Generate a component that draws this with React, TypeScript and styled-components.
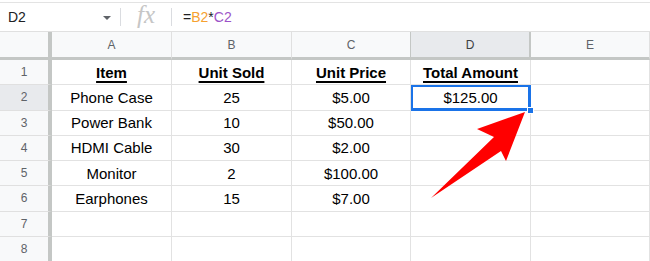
import styled, { createGlobalStyle, css } from 'styled-components';

const GlobalStyle = createGlobalStyle`
	html, body {
		margin: 0;
		padding: 0;
		background: #ffffff;
		font-family: Arial, 'Liberation Sans', sans-serif;
		overflow: hidden;
	}
`;

const columns = ['A', 'B', 'C', 'D', 'E'];

const header = ['Item', 'Unit Sold', 'Unit Price', 'Total Amount', ''];

const rows: string[][] = [
	['Phone Case', '25', '$5.00', '$125.00', ''],
	['Power Bank', '10', '$50.00', '', ''],
	['HDMI Cable', '30', '$2.00', '', ''],
	['Monitor', '2', '$100.00', '', ''],
	['Earphones', '15', '$7.00', '', ''],
	['', '', '', '', ''],
	['', '', '', '', ''],
];

const App = () => {
	return (
		<Page>
			<GlobalStyle />
			<FormulaBar>
				<NameBox>
					<CellName>D2</CellName>
					<DropArrow />
				</NameBox>
				<Divider />
				<FxLabel>fx</FxLabel>
				<Divider />
				<Formula>
					=<Ref $color="#f6a12f">B2</Ref>*<Ref $color="#9c52c8">C2</Ref>
				</Formula>
			</FormulaBar>
			<SheetWrap>
				<Grid>
					<Corner />
					{columns.map((c) => (
						<ColHeader key={c} $active={c === 'D'}>
							{c}
						</ColHeader>
					))}
					<RowHeader>1</RowHeader>
					{header.map((h, i) => (
						<Cell key={i}>
							<HeadText>{h}</HeadText>
						</Cell>
					))}
					{rows.map((r, ri) => (
						<Row key={ri} index={ri + 2} values={r} />
					))}
				</Grid>
				<Arrow viewBox="0 0 650 230" width="650" height="230">
					<polygon points="431,167 494,106 477,98 525,81 506,130 501,120" fill="#ff0000" />
				</Arrow>
			</SheetWrap>
		</Page>
	);
};

const Row = ({ index, values }: { index: number; values: string[] }) => (
	<>
		<RowHeader $active={index === 2}>{index}</RowHeader>
		{values.map((v, i) => {
			const selected = index === 2 && i === 3;
			return (
				<Cell key={i} $selected={selected}>
					{v}
					{selected && <FillHandle />}
				</Cell>
			);
		})}
	</>
);

export default App;

const Page = styled.div`
	width: 650px;
	height: 261px;
	overflow: hidden;
`;

const FormulaBar = styled.div`
	margin-top: 2px;
	height: 28px;
	border-top: 1px solid #e3e3e3;
	display: flex;
	align-items: center;
	color: #202124;
`;

const NameBox = styled.div`
	width: 120px;
	padding-left: 8px;
	padding-right: 9px;
	display: flex;
	align-items: center;
	justify-content: space-between;
	box-sizing: border-box;
`;

const CellName = styled.span`
	font-size: 14px;
`;

const DropArrow = styled.span`
	width: 0;
	height: 0;
	border-left: 4px solid transparent;
	border-right: 4px solid transparent;
	border-top: 4px solid #5f6368;
	margin-top: 2px;
`;

const Divider = styled.span`
	width: 1px;
	height: 18px;
	background: #dadce0;
`;

const FxLabel = styled.span`
	width: 50px;
	text-align: center;
	font-family: 'Liberation Serif', 'DejaVu Serif', serif;
	font-style: italic;
	font-size: 25px;
	color: #c6c6c6;
	margin-top: -4px;
`;

const Formula = styled.span`
	padding-left: 11px;
	font-size: 14px;
	color: #202124;
`;

const Ref = styled.span<{ $color: string }>`
	color: ${(p) => p.$color};
`;

const SheetWrap = styled.div`
	position: relative;
`;

const Grid = styled.div`
	display: grid;
	grid-template-columns: 52px 120px 120px 119px 120px 1fr;
	grid-template-rows: 28px repeat(8, 25.25px);
	border-top: 1px solid #e0e0e0;
`;

const Corner = styled.div`
	background: #f8f9fa;
	border-right: 4px solid #c4c7c5;
	border-bottom: 3px solid #c4c7c5;
`;

const ColHeader = styled.div<{ $active?: boolean }>`
	display: flex;
	align-items: center;
	justify-content: center;
	font-size: 12px;
	color: #5f6368;
	background: #f8f9fa;
	border-right: 1px solid #e0e0e0;
	border-bottom: 3px solid #c4c7c5;
	${(p) =>
		p.$active &&
		css`
			background: #e8eaed;
			border-right: 2px solid #c4c7c5;
			border-left: 1px solid #c4c7c5;
			margin-left: -1px;
			color: #3c4043;
		`}
`;

const RowHeader = styled.div<{ $active?: boolean }>`
	display: flex;
	align-items: center;
	justify-content: center;
	font-size: 12px;
	color: #5f6368;
	background: ${(p) => (p.$active ? '#e8eaed' : '#f8f9fa')};
	border-right: 4px solid #c4c7c5;
	border-bottom: 1px solid #e0e0e0;
`;

const Cell = styled.div<{ $selected?: boolean }>`
	position: relative;
	display: flex;
	align-items: center;
	justify-content: center;
	font-size: 15px;
	color: #000000;
	border-right: 1px solid #e2e2e2;
	border-bottom: 1px solid #e2e2e2;
	${(p) =>
		p.$selected &&
		css`
			box-shadow: inset 0 0 0 2px #1a73e8;
			border-right-color: #1a73e8;
			border-bottom-color: #1a73e8;
		`}
`;

const HeadText = styled.span`
	font-weight: bold;
	text-decoration: underline;
	text-underline-offset: 3px;
	text-decoration-thickness: 2px;
`;

const FillHandle = styled.span`
	position: absolute;
	right: -4px;
	bottom: -4px;
	width: 7px;
	height: 7px;
	background: #1a73e8;
	border: 1px solid #ffffff;
	box-sizing: border-box;
	z-index: 2;
`;

const Arrow = styled.svg`
	position: absolute;
	left: 0;
	top: 0;
	pointer-events: none;
`;
